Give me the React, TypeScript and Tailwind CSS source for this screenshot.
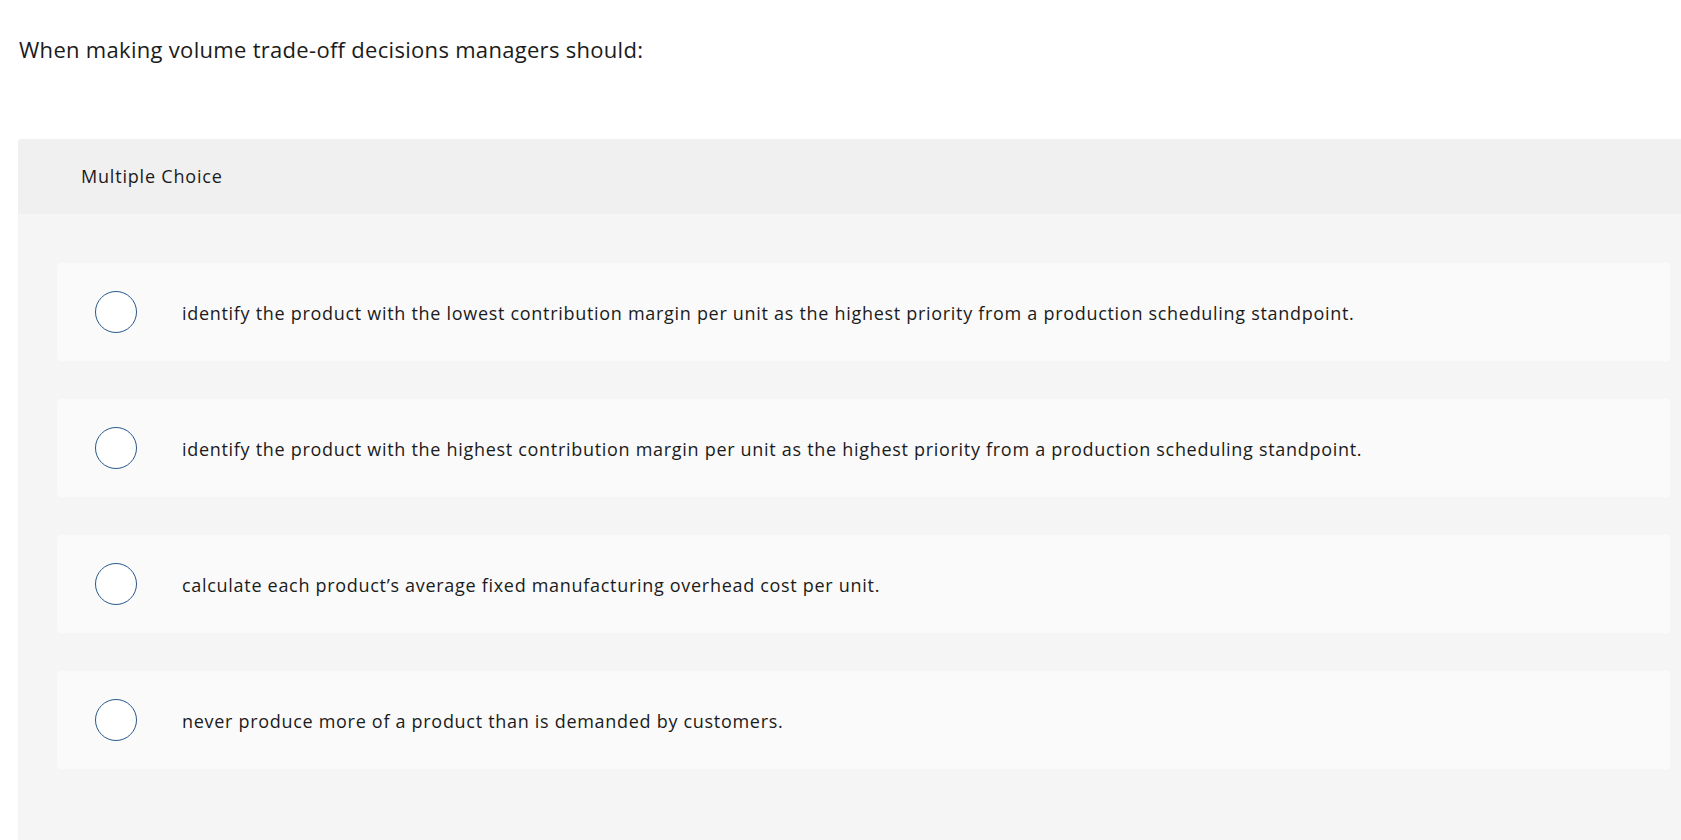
const options = [
  'identify the product with the lowest contribution margin per unit as the highest priority from a production scheduling standpoint.',
  'identify the product with the highest contribution margin per unit as the highest priority from a production scheduling standpoint.',
  'calculate each product\u2019s average fixed manufacturing overhead cost per unit.',
  'never produce more of a product than is demanded by customers.',
];

export default function App() {
  return (
    <div className="min-h-screen bg-white text-[#1b1b1b] overflow-hidden" style={{ fontFamily: '"Open Sans", Arial, sans-serif' }}>
      <div className="pl-[19px] pt-[34px] h-[139px]">
        <p className="text-[22px] leading-[30px] tracking-[0.3px]">When making volume trade-off decisions managers should:</p>
      </div>

      <div className="ml-[18px] rounded-tl-[4px] bg-[#f5f5f5] pb-[120px]">
        <div className="h-[75px] bg-[#f0f0f0] pl-[63px] flex items-center rounded-tl-[4px]">
          <span className="text-[18px] tracking-[0.8px]">Multiple Choice</span>
        </div>

        <div className="pl-[39px] pr-[11px] pt-[49px] flex flex-col gap-[38px]">
          {options.map((text) => (
            <label key={text} className="h-[98px] bg-[#fafafa] rounded-[4px] flex items-center cursor-pointer">
              <span className="ml-[38px] w-[42px] h-[42px] rounded-full border-[1.5px] border-[#285a8c] bg-white shrink-0" />
              <span className="ml-[45px] pt-[2px] text-[18px] leading-[26px] tracking-[0.7px]">{text}</span>
            </label>
          ))}
        </div>
      </div>
    </div>
  );
}
